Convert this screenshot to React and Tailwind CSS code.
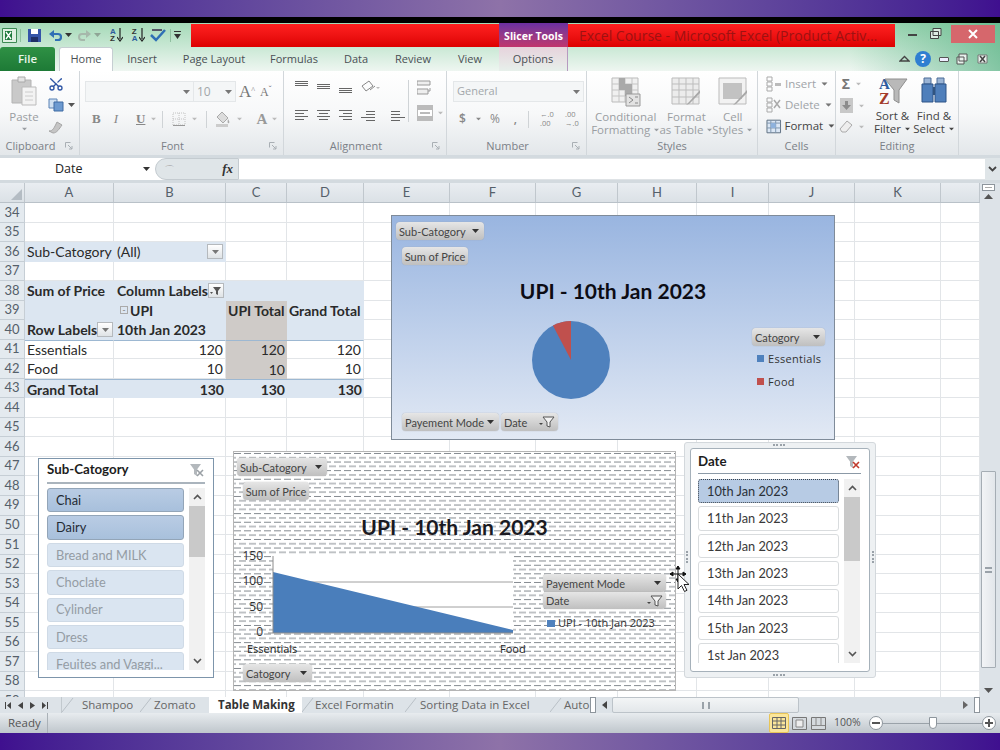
import { Scissors } from 'lucide-react';

const ROWS = [34, 35, 36, 37, 38, 39, 40, 41, 42, 43, 44, 45, 46, 47, 48, 49, 50, 51, 52, 53, 54, 55, 56, 57, 58, 59];
const COLS = ['A', 'B', 'C', 'D', 'E', 'F', 'G', 'H', 'I', 'J', 'K', ''];

const BLUE = 'bg-[#dce6f1]';
const GRAY = 'bg-[#cfcbc8]';

// row -> column index -> cell
const CELLS = {
    36: { 0: { t: 'Sub-Catogory', bg: BLUE }, 1: { t: '(All)', bg: BLUE, btn: 'arrow', pad: true } },
    38: { 0: { t: 'Sum of Price', bold: true, bg: BLUE }, 1: { t: 'Column Labels', bold: true, bg: BLUE, btn: 'filter', pad: true }, 2: { bg: BLUE }, 3: { bg: BLUE } },
    39: { 0: { bg: BLUE }, 1: { t: 'UPI', bold: true, bg: BLUE, minus: true, pad: true }, 2: { t: 'UPI Total', bold: true, bg: GRAY }, 3: { t: 'Grand Total', bold: true, bg: BLUE } },
    40: { 0: { t: 'Row Labels', bold: true, bg: BLUE, btn: 'arrow' }, 1: { t: '10th Jan 2023', bold: true, bg: BLUE, pad: true }, 2: { bg: GRAY }, 3: { bg: BLUE } },
    41: { 0: { t: 'Essentials', line: true }, 1: { t: '120', right: true, line: true }, 2: { t: '120', right: true, bg: GRAY, line: true }, 3: { t: '120', right: true, line: true } },
    42: { 0: { t: 'Food' }, 1: { t: '10', right: true }, 2: { t: '10', right: true, bg: GRAY }, 3: { t: '10', right: true } },
    43: { 0: { t: 'Grand Total', bold: true, bg: BLUE, line: true }, 1: { t: '130', right: true, bold: true, bg: BLUE, line: true }, 2: { t: '130', right: true, bold: true, bg: BLUE, line: true }, 3: { t: '130', right: true, bold: true, bg: BLUE, line: true } },
};

const Caret = ({ className = '' }) => (
    <svg width="7" height="4" viewBox="0 0 7 4" className={className}><path d="M0 0h7L3.5 4z" fill="currentColor" /></svg>
);

const Funnel = ({ color = '#8a8f94', cross }) => (
    <svg width="16" height="14" viewBox="0 0 16 14">
        <path d="M1 1h11L8 6.5V13L5 11V6.5z" fill={color} opacity="0.75" />
        {cross && <path d="M8 7l6 6M14 7l-6 6" stroke={cross} strokeWidth="1.6" />}
    </svg>
);

function CellButton({ kind }) {
    return (
        <span className="ml-auto mr-[1px] flex h-[15px] w-[16px] shrink-0 items-center justify-center border border-[#b5b9bd] bg-linear-to-b from-white to-[#dfe3e6] text-[#777]">
            {kind === 'arrow' ? (
                <Caret />
            ) : (
                <svg width="12" height="10" viewBox="0 0 12 10"><path d="M3 1h8L8 5v4L6 8V5z" fill="#555" /><path d="M0 6h3L1.5 8z" fill="#555" /></svg>
            )}
        </span>
    );
}

function SheetCell({ cell }) {
    if (!cell) return <div className="border-r border-b border-[#e2e5e8]" />;
    return (
        <div className={`flex items-center overflow-visible whitespace-nowrap pr-[2px] text-[14px] text-[#2a2a2a] ${cell.pad ? 'pl-[3px]' : 'pl-[2px]'} ${cell.bg || 'border-r border-b border-[#e2e5e8]'} ${cell.bold ? 'font-bold' : ''} ${cell.right ? 'justify-end' : ''} ${cell.line ? 'border-t border-t-[#9db8d2]' : ''}`}>
            {cell.minus && <span className="mr-[2px] ml-[3px] flex h-[8px] w-[8px] items-center justify-center border border-[#aaa] text-[8px] leading-none text-[#888]">-</span>}
            {cell.t}
            {cell.btn && <CellButton kind={cell.btn} />}
        </div>
    );
}

function FieldBtn({ label, caret, filter, className }) {
    return (
        <div className={`absolute flex items-center rounded-[4px] bg-linear-to-b from-[#e6e6e6] to-[#bfbfbf] px-[3px] font-['Lato',sans-serif] text-[11px] leading-none text-[#444] shadow-[0_0_1px_#999] ${className}`}>
            <span className="whitespace-nowrap">{label}</span>
            {caret && <Caret className="ml-auto mr-[2px] text-[#333]" />}
            {filter && (
                <svg className="ml-auto" width="16" height="12" viewBox="0 0 16 12"><path d="M4 1h11l-4 5v5l-3-1V6z" fill="#f3f3f3" stroke="#555" /><path d="M0 7h4L2 9z" fill="#444" /></svg>
            )}
        </div>
    );
}

function PieChart() {
    return (
        <div className="absolute left-[391px] top-[12px] h-[225px] w-[444px] border border-[#7f8b99] bg-linear-to-b from-[#99b5e0] to-[#e2e9f4] font-['Open_Sans',sans-serif]">
            <FieldBtn label="Sub-Catogory" caret className="left-[4px] top-[6px] h-[18px] w-[88px]" />
            <FieldBtn label="Sum of Price" className="left-[10px] top-[31px] h-[18px] w-[66px] justify-center" />
            <div className="absolute inset-x-0 top-[61px] text-center font-['Lato',sans-serif] text-[21px] font-bold leading-[28px] text-[#0c0c14]">UPI - 10th Jan 2023</div>
            <svg className="absolute left-[139px] top-[104px]" width="80" height="80" viewBox="0 0 80 80">
                <circle cx="40" cy="40" r="39" fill="#4f81bd" />
                <path d="M40 40V1A39 39 0 0 0 21.9 5.5z" fill="#c0504d" />
            </svg>
            <FieldBtn label="Catogory" caret className="left-[360px] top-[112px] h-[18px] w-[73px]" />
            <div className="absolute left-[365px] top-[135px] flex flex-col gap-[8px] text-[11px] leading-[15px] tracking-[0.3px] text-[#333]">
                <div className="flex items-center gap-[4px]"><span className="h-[7px] w-[7px] bg-[#4f81bd]" />Essentials</div>
                <div className="flex items-center gap-[4px]"><span className="h-[7px] w-[7px] bg-[#c0504d]" />Food</div>
            </div>
            <FieldBtn label="Payement Mode" caret className="left-[10px] top-[197px] h-[18px] w-[97px]" />
            <FieldBtn label="Date" filter className="left-[109px] top-[197px] h-[18px] w-[57px]" />
        </div>
    );
}

function AreaChart() {
    return (
        <div className="absolute left-[233px] top-[248px] h-[240px] w-[443px] border border-[#b5b5b5] bg-white font-['Open_Sans',sans-serif]">
            <svg className="absolute inset-0" width="441" height="238">
                <defs>
                    <pattern id="hatch" width="10" height="8.6" patternUnits="userSpaceOnUse">
                        <path d="M0 1.5h7M5 5.8h5M0 5.8h2" stroke="#80868c" strokeWidth="1" />
                    </pattern>
                </defs>
                <rect width="441" height="238" fill="url(#hatch)" />
                <rect x="39" y="104" width="240" height="77" fill="#fff" />
                <path d="M39 130h240M39 155h240" stroke="#a0a0a0" />
                <path d="M39 120L279 178V181H39z" fill="#4a7ebb" />
                <path d="M34 181h245M39 104v77" stroke="#8c8c8c" fill="none" />
            </svg>
            <FieldBtn label="Sub-Catogory" caret className="left-[3px] top-[6px] h-[18px] w-[90px]" />
            <FieldBtn label="Sum of Price" className="left-[9px] top-[30px] h-[18px] w-[66px] justify-center" />
            <div className="absolute inset-x-0 top-[61px] text-center font-['Lato',sans-serif] text-[21px] font-bold leading-[28px] text-[#1a1a22]">UPI - 10th Jan 2023</div>
            <div className="absolute left-[4px] top-[96px] flex w-[25px] flex-col items-end gap-[9.3px] text-[12px] leading-[16px] text-[#333]">
                <span>150</span><span>100</span><span>50</span><span>0</span>
            </div>
            <span className="absolute left-[13px] top-[189px] text-[11px] leading-[16px] text-[#222]">Essentials</span>
            <span className="absolute left-[266px] top-[189px] text-[11px] leading-[16px] text-[#222]">Food</span>
            <FieldBtn label="Catogory" caret className="left-[9px] top-[212px] h-[18px] w-[69px]" />
            <FieldBtn label="Payement Mode" caret className="left-[309px] top-[122px] h-[18px] w-[123px]" />
            <FieldBtn label="Date" filter className="left-[309px] top-[140px] h-[17px] w-[123px]" />
            <div className="absolute left-[313px] top-[163px] flex items-center gap-[3px] whitespace-nowrap text-[11px] leading-[16px] text-[#333]">
                <span className="h-[7px] w-[8px] bg-[#4f81bd]" />UPI - 10th Jan 2023
            </div>
        </div>
    );
}

function SlicerItem({ label, state }) {
    const styles = {
        on: 'border-[#93a5b8] bg-linear-to-b from-[#b9cce4] to-[#a8c0dc] text-[#1f2a33]',
        off: 'border-[#cfdae6] bg-[#dae5f1] text-[#949ca4]',
        focus: 'border-dotted border-[#39424b] bg-[#b7cbe4] text-[#2a3138]',
        plain: 'border-[#d9dcde] bg-white text-[#3a3a3a]',
    };
    return (
        <div className={`flex h-[24.4px] shrink-0 items-center rounded-[3px] border pl-[8px] text-[12.8px] leading-none whitespace-nowrap ${styles[state]}`}>{label}</div>
    );
}

function SlicerScroll({ thumbTop, thumbH }) {
    return (
        <div className="flex w-[16px] shrink-0 flex-col bg-[#f1f1f1]">
            <svg className="mx-auto mt-[6px] shrink-0" width="9" height="6" viewBox="0 0 9 6"><path d="M1 5l3.5-3.5L8 5" fill="none" stroke="#555" strokeWidth="1.6" /></svg>
            <div className="shrink-0" style={{ height: thumbTop }} />
            <div className="shrink-0 bg-[#c9c9c9]" style={{ height: thumbH }} />
            <svg className="mx-auto mb-[6px] mt-auto shrink-0" width="9" height="6" viewBox="0 0 9 6"><path d="M1 1l3.5 3.5L8 1" fill="none" stroke="#555" strokeWidth="1.6" /></svg>
        </div>
    );
}

function SubCategorySlicer() {
    const items = [['Chai', 'on'], ['Dairy', 'on'], ['Bread and MILK', 'off'], ['Choclate', 'off'], ['Cylinder', 'off'], ['Dress', 'off'], ['Feuites and Vaggi...', 'off']];
    return (
        <div className="absolute left-[38px] top-[255px] flex h-[220px] w-[176px] flex-col border border-[#7d95ab] bg-white px-[8px] pb-[7px] font-['Lato',sans-serif]">
            <div className="flex h-[25px] shrink-0 items-center justify-between border-b-2 border-[#aab4bd] pb-[1px] text-[13.3px] font-bold text-[#1d1d1d]">
                Sub-Catogory
                <Funnel color="#9aa0a5" cross="#9aa0a5" />
            </div>
            <div className="mt-[4px] flex min-h-0 flex-1 gap-[5px]">
                <div className="flex w-[137px] flex-col gap-[3px] overflow-hidden">
                    {items.map(([label, state]) => <SlicerItem key={label} label={label} state={state} />)}
                </div>
                <SlicerScroll thumbTop={6} thumbH={51} />
            </div>
        </div>
    );
}

function Handle({ className }) {
    return <span className={`absolute border-dotted border-[#9aa2a9] ${className}`} />;
}

function DateSlicer() {
    const items = ['10th Jan 2023', '11th Jan 2023', '12th Jan 2023', '13th Jan 2023', '14th Jan 2023', '15th Jan 2023', '1st Jan 2023'];
    return (
        <div className="absolute left-[684px] top-[239px] h-[236px] w-[192px] rounded-[3px] border border-[#d3d8dc] bg-[#eef1f3] p-[5px] font-['Lato',sans-serif]">
            <Handle className="left-[88px] top-[1px] w-[12px] border-t-2" />
            <Handle className="bottom-[1px] left-[88px] w-[12px] border-t-2" />
            <Handle className="left-[1px] top-[108px] h-[12px] border-l-2" />
            <Handle className="right-[1px] top-[108px] h-[12px] border-l-2" />
            <div className="flex h-full w-full flex-col rounded-[3px] border border-[#a6b1ba] bg-white pb-[8px] pl-[7px] pr-[8px]">
                <div className="flex h-[25px] shrink-0 items-center justify-between border-b border-[#8b99a6] pt-[1px] text-[13.3px] font-bold text-[#1d1d1d]">
                    Date
                    <Funnel color="#9aa0a5" cross="#c0392b" />
                </div>
                <div className="mt-[5px] flex min-h-0 flex-1 gap-[5px]">
                    <div className="flex w-[141px] flex-col gap-[3px] overflow-hidden">
                        {items.map((label, i) => <SlicerItem key={label} label={label} state={i === 0 ? 'focus' : 'plain'} />)}
                    </div>
                    <SlicerScroll thumbTop={6} thumbH={64} />
                </div>
            </div>
        </div>
    );
}

function Grid() {
    return (
        <div className="relative h-[494px] overflow-hidden bg-white font-['Lato',sans-serif]">
            <div className="grid auto-rows-[19.54px] grid-cols-[25px_89px_112px_61px_77px_86px_86px_82px_79px_72px_86px_86px_39px]">
                {ROWS.map(r => (
                    <div key={r} className="contents">
                        <div className="flex items-center justify-center border-r border-b border-[#c6ced5] bg-[#e4eaef] text-[13px] text-[#55606a]">{r}</div>
                        {COLS.map((c, i) => <SheetCell key={i} cell={CELLS[r]?.[i]} />)}
                    </div>
                ))}
            </div>
            <PieChart />
            <AreaChart />
            <SubCategorySlicer />
            <DateSlicer />
            <svg className="absolute left-[669px] top-[362px]" width="22" height="28" viewBox="0 0 22 28">
                <path d="M9 1v16M1 9h16M9 1l-2 3h4zM9 17l-2-3h4zM1 9l3-2v4zM17 9l-3-2v4z" stroke="#111" strokeWidth="1" fill="#111" />
                <path d="M9 9v15l3.5-3.5 3 6 2.5-1.2-3-5.800h5z" fill="#fff" stroke="#222" />
            </svg>
        </div>
    );
}

function ColumnHeaders() {
    const heads = [['A', 'w-[89px]'], ['B', 'w-[112px]'], ['C', 'w-[61px]'], ['D', 'w-[77px]'], ['E', 'w-[86px]'], ['F', 'w-[86px]'], ['G', 'w-[82px]'], ['H', 'w-[79px]'], ['I', 'w-[72px]'], ['J', 'w-[86px]'], ['K', 'w-[86px]'], ['', 'w-[39px]']];
    return (
        <div className="flex h-[20px] shrink-0 border-b border-[#b9c1c8] bg-linear-to-b from-[#e9edf1] to-[#dbe1e6] font-['Lato',sans-serif] text-[13px] text-[#55606a]">
            <div className="flex w-[25px] items-end justify-end border-r border-[#c0c7cd] p-[2px]">
                <svg width="11" height="11" viewBox="0 0 11 11"><path d="M11 0v11H0z" fill="#b4bcc3" /></svg>
            </div>
            {heads.map(([label, w], i) => (
                <div key={i} className={`flex items-center justify-center border-r border-[#c0c7cd] ${w}`}>{label}</div>
            ))}
        </div>
    );
}

function VerticalScroll() {
    return (
        <div className="flex w-[20px] shrink-0 flex-col bg-[#dde3e8] pl-[1px] pr-[4px] text-[#555]">
            <div className="mx-auto mt-[1px] flex h-[7px] w-[13px] items-center justify-center border border-[#8d959c] bg-white">
                <span className="h-[1px] w-[7px] bg-[#aaa]" />
            </div>
            <svg className="mx-auto mt-[3px]" width="9" height="5" viewBox="0 0 9 5"><path d="M4.500 0L9 5H0z" fill="currentColor" /></svg>
            <div className="mt-[272px] flex h-[197px] items-center justify-center rounded-[1px] border border-[#a5adb4] bg-linear-to-r from-[#f2f4f6] to-[#e2e6ea]">
                <span className="h-[6px] w-[7px] border-y-2 border-double border-[#9aa2a9]" />
            </div>
            <svg className="mx-auto mt-[20px]" width="9" height="5" viewBox="0 0 9 5"><path d="M0 0h9L4.500 5z" fill="currentColor" /></svg>
        </div>
    );
}

function RibbonTextButton({ lines, caretLine = 1, dark, wide }) {
    return (
        <div className={`flex flex-col items-center text-[11.5px] leading-[13px] ${dark ? 'text-[#444]' : 'text-[#9a9ea2]'} ${wide || ''}`}>
            {lines.map((l, i) => (
                <span key={i} className="flex items-center gap-[3px] whitespace-nowrap">{l}{i === caretLine && <Caret className="scale-75" />}</span>
            ))}
        </div>
    );
}

function Group({ label, width, launcher, children }) {
    return (
        <div className={`flex h-full shrink-0 flex-col border-r border-[#d2d7db] ${width}`}>
            <div className="min-h-0 flex-1">{children}</div>
            <div className={`relative flex h-[18px] shrink-0 items-center justify-center text-[11px] text-[#7b8087] ${launcher ? 'pr-[18px]' : ''}`}>
                {label}
                {launcher && (
                    <svg className="absolute right-[6px] top-[5px]" width="8" height="8" viewBox="0 0 8 8"><path d="M0.500 0.500h5M0.500 0.500v5M3 3l4 4M7 4v3H4" stroke="#a9afb4" fill="none" /></svg>
                )}
            </div>
        </div>
    );
}

const AlignLines = ({ rows }) => (
    <svg width="14" height="14" viewBox="0 0 14 14">
        {rows.map(([x1, x2, y], i) => <path key={i} d={`M${x1} ${y + 0.5}H${x2}`} stroke="#666" />)}
    </svg>
);

function GrayIcon({ type }) {
    if (type === 'cond') {
        return (
            <svg width="30" height="30" viewBox="0 0 30 30">
                <path d="M1 1h26v24H1z" fill="#f0f0f0" stroke="#bbb" />
                <path d="M1 7h26M1 13h26M1 19h26M8 1v24M14 1v24M21 1v24" stroke="#c4c4c4" />
                <path d="M8 1h6v12H8zM14 7h7v12h-7z" fill="#a9a9a9" />
                <path d="M15 17h14v12H15z" fill="#e2e2e2" stroke="#999" />
                <path d="M18 20l4 3-4 3M24 20h3M24 26h3" stroke="#888" fill="none" />
            </svg>
        );
    }
    if (type === 'table') {
        return (
            <svg width="30" height="30" viewBox="0 0 30 30">
                <path d="M1 1h27v26H1z" fill="#ececec" stroke="#bbb" />
                <path d="M1 7h27M1 13h27M1 20h27M8 1v26M15 1v26M22 1v26" stroke="#bdbdbd" />
                <path d="M29 13L18 25l-3 3 3-1 11-11z" fill="#a8a8a8" />
            </svg>
        );
    }
    return (
        <svg width="30" height="30" viewBox="0 0 30 30">
            <path d="M1 1h27v26H1z" fill="#f2f2f2" stroke="#bbb" />
            <path d="M5 6h19v16H5z" fill="#c2c2c2" />
            <path d="M29 13L18 25l-3 3 3-1 11-11z" fill="#a8a8a8" />
        </svg>
    );
}

function Ribbon() {
    return (
        <div className="flex h-[84px] shrink-0 bg-linear-to-b from-white via-[#f7f8f9] to-[#e3e7ea] font-['Open_Sans',sans-serif]">
            <Group label="Clipboard" width="w-[80px]" launcher>
                <div className="flex">
                    <div className="flex w-[48px] flex-col items-center pt-[5px] text-[11.5px] leading-[13px] text-[#9a9ea2]">
                        <svg width="26" height="30" viewBox="0 0 26 30">
                            <path d="M1 4h19v23H1z" fill="#c9c9c9" stroke="#b3b3b3" />
                            <path d="M7 1h7v5H7z" fill="#e4e4e4" stroke="#aaa" />
                            <path d="M11 11h14v18H11z" fill="#f3f3f3" stroke="#bbb" />
                            <path d="M14 16h8M14 20h8M14 24h8" stroke="#ccc" />
                        </svg>
                        <span className="mt-[4px]">Paste</span>
                        <Caret className="mt-[4px] scale-75" />
                    </div>
                    <div className="flex flex-col items-start gap-[6px] pt-[5px]">
                        <Scissors size={16} color="#2f56a5" strokeWidth={2} className="-rotate-90" />
                        <div className="flex items-center gap-[4px] text-[#555]">
                            <svg width="16" height="14" viewBox="0 0 16 14"><path d="M1 1h8v9H1z" fill="#cfe0f2" stroke="#5b82b5" /><path d="M6 4h9v9H6z" fill="#6d9ad0" stroke="#3e6ba3" /></svg>
                            <Caret />
                        </div>
                        <svg width="16" height="16" viewBox="0 0 16 16"><path d="M1 13c4 0 5-3 8-9l5 3c-3 4-5 8-9 8z" fill="#c5c5c5" stroke="#a5a5a5" /></svg>
                    </div>
                </div>
            </Group>
            <Group label="Font" width="w-[204px]" launcher>
                <div className="flex flex-col gap-[7px] pl-[5px] pt-[10px] text-[#8f9499]">
                    <div className="flex h-[21px] items-center">
                        <div className="flex h-full w-[109px] items-center justify-end border border-[#e4e7e9] bg-[#f4f6f7] pr-[3px] text-[#777]"><Caret /></div>
                        <div className="flex h-full w-[42px] items-center border border-l-0 border-[#e4e7e9] bg-[#f4f6f7] pl-[3px] pr-[3px] text-[12px] text-[#a2a6aa]">10<Caret className="ml-auto text-[#777]" /></div>
                        <span className="ml-[3px] font-['Liberation_Serif',serif] text-[17px] leading-none text-[#777]">A<sup className="text-[8px]">^</sup></span>
                        <span className="ml-[5px] font-['Liberation_Serif',serif] text-[12px] leading-none text-[#777]">A<sup className="text-[8px]">ˇ</sup></span>
                    </div>
                    <div className="flex h-[20px] items-center font-['Liberation_Serif',serif] text-[13px] text-[#888]">
                        <b className="ml-[7px]">B</b>
                        <i className="ml-[13px]">I</i>
                        <u className="ml-[18px] font-bold">U</u>
                        <Caret className="ml-[5px] scale-75 text-[#bbb]" />
                        <span className="ml-[5px] h-[17px] border-l border-[#cfd3d6]" />
                        <svg className="ml-[9px]" width="14" height="14" viewBox="0 0 14 14"><path d="M1 1h12v12H1zM7 1v12M1 7h12" fill="none" stroke="#c2c2c2" strokeDasharray="1 1" /><path d="M1 13.500h12" stroke="#999" /></svg>
                        <Caret className="ml-[5px] scale-75 text-[#bbb]" />
                        <span className="ml-[8px] h-[17px] border-l border-[#cfd3d6]" />
                        <svg className="ml-[8px]" width="16" height="16" viewBox="0 0 16 16"><path d="M7 1l6 6-5 5-6-6z" fill="#dcdcdc" stroke="#aaa" /><path d="M13 8c1 2 2 3 1 4s-2 0-1-4z" fill="#aaa" /><path d="M1 13h12v3H1z" fill="#ccc" /></svg>
                        <Caret className="ml-[5px] scale-75 text-[#bbb]" />
                        <span className="ml-[13px] text-[15px] font-bold text-[#999]">A</span>
                        <Caret className="ml-[4px] scale-75 text-[#bbb]" />
                    </div>
                </div>
            </Group>
            <Group label="Alignment" width="w-[163px]" launcher>
                <div className="flex pl-[11px] pt-[9px]">
                    <div className="grid grid-cols-[22px_22px_22px_30px_14px] gap-y-[15px]">
                        <AlignLines rows={[[0, 13, 1], [0, 13, 3], [0, 13, 5]]} />
                        <AlignLines rows={[[0, 13, 4], [0, 13, 6], [0, 13, 8]]} />
                        <AlignLines rows={[[0, 13, 8], [0, 13, 10], [0, 13, 12]]} />
                        <svg width="20" height="14" viewBox="0 0 20 14"><path d="M1 6l7-5 4 5-7 5zM9 10l5-4" fill="none" stroke="#888" /><path d="M15 7h4l-2 2z" fill="#bbb" /></svg>
                        <span />
                        <AlignLines rows={[[0, 13, 1], [0, 9, 4], [0, 13, 7], [0, 9, 10]]} />
                        <AlignLines rows={[[0, 13, 1], [2, 11, 4], [0, 13, 7], [2, 11, 10]]} />
                        <AlignLines rows={[[0, 13, 1], [4, 13, 4], [0, 13, 7], [4, 13, 10]]} />
                        <AlignLines rows={[[5, 14, 2], [5, 14, 5], [0, 14, 8], [5, 14, 11]]} />
                        <AlignLines rows={[[0, 9, 2], [0, 9, 5], [0, 14, 8], [0, 9, 11]]} />
                    </div>
                    <span className="ml-[3px] h-[42px] border-l border-[#cfd3d6]" />
                    <div className="ml-[8px] flex flex-col gap-[9px]">
                        <svg width="16" height="16" viewBox="0 0 16 16"><path d="M0 1h13v4H0zM0 9h11v5H0z" fill="#eee" stroke="#999" /><path d="M13 8v3l-2 0" stroke="#999" fill="none" /></svg>
                        <div className="flex items-center gap-[4px]">
                            <svg width="16" height="16" viewBox="0 0 16 16"><path d="M0 0h16v16H0z" fill="#bbb" /><path d="M1 5h14v6H1z" fill="#fff" /><path d="M3 8h10" stroke="#777" /></svg>
                            <Caret className="scale-75 text-[#bbb]" />
                        </div>
                    </div>
                </div>
            </Group>
            <Group label="Number" width="w-[140px]" launcher>
                <div className="flex flex-col gap-[7px] pl-[6px] pt-[10px] text-[#8f9499]">
                    <div className="flex h-[21px] w-[131px] items-center border border-[#e4e7e9] bg-[#f4f6f7] px-[3px] text-[11px] text-[#a2a6aa]">General<Caret className="ml-auto text-[#777]" /></div>
                    <div className="flex h-[20px] items-center text-[12px] font-semibold text-[#888]">
                        <span className="ml-[6px]">$</span>
                        <Caret className="ml-[9px] scale-75" />
                        <span className="ml-[8px] font-normal">%</span>
                        <span className="ml-[14px]">,</span>
                        <span className="ml-[11px] h-[17px] border-l border-[#cfd3d6]" />
                        <span className="ml-[11px] flex w-[21px] flex-col text-[7.5px] font-normal leading-[9px]"><span>←.0</span><span>.00</span></span>
                        <span className="ml-[4px] flex flex-col text-[7.5px] font-normal leading-[9px]"><span>.00</span><span>→.0</span></span>
                    </div>
                </div>
            </Group>
            <Group label="Styles" width="w-[171px]">
                <div className="flex pt-[6px]">
                    <div className="flex w-[78px] flex-col items-center gap-[3px]"><GrayIcon type="cond" /><RibbonTextButton lines={['Conditional', 'Formatting']} /></div>
                    <div className="flex w-[44px] flex-col items-center gap-[3px]"><GrayIcon type="table" /><RibbonTextButton lines={['Format', 'as Table']} /></div>
                    <div className="flex w-[49px] flex-col items-center gap-[3px]"><GrayIcon type="cell" /><RibbonTextButton lines={['Cell', 'Styles']} /></div>
                </div>
            </Group>
            <Group label="Cells" width="w-[78px]">
                <div className="flex flex-col gap-[5px] pl-[8px] pt-[5px] text-[11.5px] leading-[16px]">
                    <div className="flex items-center gap-[3px] text-[#a0a4a8]">
                        <svg width="16" height="16" viewBox="0 0 16 16"><path d="M1 1h5v4H1zM1 6h5v4H1zM1 11h5v4H1z" fill="none" stroke="#aaa" /><path d="M9 7h6v3H9z" fill="#bbb" /></svg>
                        Insert<Caret className="ml-[2px] scale-90 text-[#777]" />
                    </div>
                    <div className="flex items-center gap-[3px] text-[#a0a4a8]">
                        <svg width="16" height="16" viewBox="0 0 16 16"><path d="M1 1h5v4H1zM1 6h5v4H1zM1 11h5v4H1z" fill="none" stroke="#aaa" /><path d="M8 3l6 8M14 3l-6 8" stroke="#aaa" strokeWidth="1.5" /></svg>
                        Delete<Caret className="ml-[2px] scale-90 text-[#777]" />
                    </div>
                    <div className="flex items-center gap-[3px] text-[#444]">
                        <svg width="16" height="16" viewBox="0 0 16 16"><path d="M1 2h14v13H1z" fill="#dbe7f5" stroke="#5e6f80" /><path d="M1 5h14M5 2v13M10 2v13M1 10h14" stroke="#7d95ad" /><path d="M5 5h5v5H5z" fill="#8eb2dd" /></svg>
                        Format<Caret className="ml-[2px] scale-90 text-[#555]" />
                    </div>
                </div>
            </Group>
            <Group label="Editing" width="w-[123px]">
                <div className="flex pt-[5px]">
                    <div className="flex w-[36px] flex-col items-center gap-[7px] pr-[4px] text-[#777]">
                        <span className="flex items-center gap-[5px] text-[14px] font-bold leading-[15px]">Σ<Caret className="scale-75 text-[#bbb]" /></span>
                        <span className="flex items-center gap-[5px]"><svg width="13" height="15" viewBox="0 0 13 15"><path d="M0 0h13v15H0z" fill="#c8c8c8" /><path d="M6.500 12L2 7h3V3h3v4h3z" fill="#8c8c8c" /></svg><Caret className="scale-75 text-[#bbb]" /></span>
                        <span className="flex items-center gap-[5px]"><svg width="14" height="13" viewBox="0 0 14 13"><path d="M1 9l7-8 5 4-6 7H3z" fill="#eee" stroke="#aaa" /></svg><Caret className="scale-75 text-[#bbb]" /></span>
                    </div>
                    <div className="flex w-[41px] flex-col items-center">
                        <svg width="30" height="30" viewBox="0 0 30 30">
                            <text x="1" y="13" fontSize="15" fontWeight="700" fontFamily="Liberation Serif" fill="#2e5c9e">A</text>
                            <text x="1" y="28" fontSize="16" fontWeight="700" fontFamily="Liberation Serif" fill="#a33a2a">Z</text>
                            <path d="M7 3h22L21 14v13l-5-3V14z" fill="#b9b9b9" stroke="#8f8f8f" />
                        </svg>
                        <RibbonTextButton dark lines={['Sort &', 'Filter']} wide="mt-[3px]" />
                    </div>
                    <div className="flex w-[42px] flex-col items-center">
                        <svg width="30" height="30" viewBox="0 0 30 30">
                            <path d="M5 2h7v6H5zM18 2h7v6h-7z" fill="#9ab4d5" stroke="#4c6d98" />
                            <path d="M3 8h11v18H3zM16 8h11v18H16z" fill="#4f7fbb" stroke="#2f5587" />
                            <path d="M14 11h2v8h-2z" fill="#31547f" />
                        </svg>
                        <RibbonTextButton dark lines={['Find &', 'Select']} wide="mt-[3px]" />
                    </div>
                </div>
            </Group>
        </div>
    );
}

function TitleBar() {
    return (
        <div className="flex h-[24px] shrink-0">
            <div className="flex w-[191px] shrink-0 items-center pl-[2px]">
                <svg width="15" height="15" viewBox="0 0 15 15"><path d="M0.500 0.500h14v14h-14z" fill="#dff0e2" stroke="#3c8b53" /><path d="M3 3h7v9H3z" fill="#1e7a3c" /><path d="M4 4l5 7M9 4l-5 7" stroke="#fff" strokeWidth="1.3" /></svg>
                <span className="ml-[3px] h-[13px] border-l border-[#8fbf9f]" />
                <svg className="ml-[6px]" width="15" height="15" viewBox="0 0 15 15"><path d="M1 1h13v13H1z" fill="#3454a8" /><path d="M4 1h7v5H4z" fill="#fff" /><path d="M4 9h7v5H4z" fill="#1f2f66" /></svg>
                <svg className="ml-[7px]" width="13" height="13" viewBox="0 0 13 13"><path d="M4 5h5a3 3 0 010 6H6" fill="none" stroke="#2f6fb5" strokeWidth="2.200" /><path d="M5 1v8L0 5z" fill="#2f6fb5" /></svg>
                <Caret className="ml-[3px] text-[#333]" />
                <svg className="ml-[6px]" width="13" height="13" viewBox="0 0 13 13"><path d="M9 5H4a3 3 0 000 6h3" fill="none" stroke="#a6b8ab" strokeWidth="2" /><path d="M8 1v8l5-4z" fill="#a6b8ab" /></svg>
                <Caret className="ml-[3px] text-[#8fa595]" />
                <div className="ml-[9px] flex flex-col font-['Liberation_Sans',sans-serif] text-[8px] font-bold leading-[7px]"><span className="text-[#2e5c9e]">A</span><span className="text-[#333]">Z</span></div>
                <svg className="ml-[1px]" width="6" height="14" viewBox="0 0 6 14"><path d="M3 0v11M0 9l3 4 3-4" fill="none" stroke="#222" strokeWidth="1.200" /></svg>
                <div className="ml-[9px] flex flex-col font-['Liberation_Sans',sans-serif] text-[8px] font-bold leading-[7px]"><span className="text-[#333]">Z</span><span className="text-[#2e5c9e]">A</span></div>
                <svg className="ml-[1px]" width="6" height="14" viewBox="0 0 6 14"><path d="M3 0v11M0 9l3 4 3-4" fill="none" stroke="#222" strokeWidth="1.200" /></svg>
                <svg className="ml-[5px]" width="16" height="14" viewBox="0 0 16 14"><path d="M1 7l5 5 9-10" fill="none" stroke="#2f6fb5" strokeWidth="2.500" /><path d="M2 2h10" stroke="#556" strokeWidth="2" /></svg>
                <span className="ml-[4px] h-[13px] border-l border-[#8fbf9f]" />
                <svg className="ml-[3px]" width="7" height="8" viewBox="0 0 7 8"><path d="M0 0h7v1H0zM0 3h7L3.500 8z" fill="#333" /></svg>
            </div>
            <div className="mt-[1px] h-[23px] w-[308px] shrink-0 bg-linear-to-b from-[#ff2020] to-[#dd0000]" />
            <div className="flex h-[24px] w-[69px] shrink-0 items-center justify-center bg-linear-to-b from-[#6b2fa0] to-[#c1336c] pt-[3px] text-[10.5px] font-bold text-white">Slicer Tools</div>
            <div className="mt-[1px] flex h-[23px] w-[327px] shrink-0 items-center bg-linear-to-b from-[#ff2020] to-[#dd0000] pl-[11px] text-[14px] whitespace-nowrap text-[#9d1212]">Excel Course  -  Microsoft Excel (Product Activ...</div>
            <div className="flex flex-1 items-start pt-[2px] text-white">
                <span className="ml-[13px] mt-[9px] h-[2px] w-[9px] bg-[#444]" />
                <svg className="ml-[13px] mt-[3px]" width="12" height="11" viewBox="0 0 12 11"><path d="M3 .5h8v7H3zM.5 3.500h8v7h-8z" fill="#dcece2" stroke="#444" /></svg>
                <div className="ml-[9px] flex h-[18px] w-[44px] items-center justify-center bg-[#d6676c]">
                    <svg width="10" height="10" viewBox="0 0 10 10"><path d="M1 1l8 8M9 1l-8 8" stroke="#fff" strokeWidth="2" /></svg>
                </div>
            </div>
        </div>
    );
}

function TabsBar() {
    const tabs = [['Insert', 'w-[58px]'], ['Page Layout', 'w-[86px]'], ['Formulas', 'w-[74px]'], ['Data', 'w-[50px]'], ['Review', 'w-[64px]'], ['View', 'w-[50px]']];
    return (
        <div className="flex h-[24px] shrink-0 text-[11px] text-[#4a4f54]">
            <div className="flex h-full w-[55px] items-center justify-center rounded-t-[3px] bg-linear-to-b from-[#2f9145] to-[#1d7a36] text-[11.5px] font-semibold text-[#e8f5ea]">File</div>
            <div className="ml-[4px] flex h-[24px] w-[54px] items-center justify-center rounded-t-[3px] border border-b-0 border-[#c6ced2] bg-white">Home</div>
            {tabs.map(([label, w]) => <div key={label} className={`flex items-center justify-center pt-[1px] ${w}`}>{label}</div>)}
            <div className="ml-[4px] flex w-[69px] items-center justify-center border-r border-[#b69ac0] bg-linear-to-b from-[#e6d3dc] to-[#e7f0eb] pt-[1px]">Options</div>
            <div className="flex flex-1 items-center">
                <svg className="ml-[331px]" width="11" height="8" viewBox="0 0 11 8"><path d="M1 6l4.500-4.500L10 6z" fill="none" stroke="#444" strokeWidth="1.400" /></svg>
                <span className="ml-[5px] flex h-[16px] w-[16px] items-center justify-center rounded-full bg-[#2f7fd1] text-[12px] font-bold text-white">?</span>
                <span className="ml-[8px] h-[5px] w-[10px] rounded-[1px] border border-[#555] bg-[#eef]" />
                <svg className="ml-[7px]" width="12" height="12" viewBox="0 0 12 12"><path d="M3 1h8v7H3zM1 4h7v7H1z" fill="#e8f1ec" stroke="#555" /></svg>
                <svg className="ml-[9px]" width="11" height="10" viewBox="0 0 11 10"><path d="M1 1h9v8H1z" fill="#e8f1ec" stroke="#777" /><path d="M3 2l5 6M8 2L3 8" stroke="#444" strokeWidth="1.500" /></svg>
            </div>
        </div>
    );
}

function FormulaBar() {
    return (
        <div className="my-[3px] flex h-[22px] shrink-0 bg-white">
            <div className="flex w-[155px] items-center pl-[55px] font-['Open_Sans',sans-serif] text-[12.5px] text-[#222]">
                Date
                <Caret className="ml-auto mr-[5px] text-[#333]" />
            </div>
            <div className="flex w-[84px] items-center rounded-l-[11px] border border-[#c4cbd0] bg-[#dfe5e8] pl-[8px] pr-[5px]">
                <span className="text-[11px] leading-none text-[#aaa]">⌒</span>
                <span className="ml-auto font-['Liberation_Serif',serif] text-[13px] font-bold italic text-[#333]">fx</span>
            </div>
            <div className="flex-1 border-y border-[#dfe3e6]" />
            <div className="flex w-[15px] items-center justify-center bg-[#dfe5e8]">
                <svg width="9" height="6" viewBox="0 0 9 6"><path d="M1 1l3.500 3.500L8 1" fill="none" stroke="#444" strokeWidth="1.800" /></svg>
            </div>
        </div>
    );
}

function SheetTabs() {
    const tabs = [
        { label: 'Shampoo', box: 'w-[78px] pl-[20px]' },
        { label: 'Zomato', box: 'w-[69px] pl-[14px]' },
        { label: 'Table Making', box: 'w-[93px] pl-[9px] bg-white font-bold text-[#333]', active: true },
        { label: 'Excel Formatin', box: 'w-[103px] pl-[13px]' },
        { label: 'Sorting Data in Excel', box: 'w-[145px] pl-[15px]' },
        { label: 'Auto', box: 'w-[40px] pl-[14px] overflow-hidden' },
    ];
    return (
        <div className="flex h-[16px] shrink-0 bg-[#dde3e8] font-['Open_Sans',sans-serif] text-[11.5px] leading-[16px] text-[#666]">
            <div className="flex w-[62px] items-center gap-[7px] border-r border-[#c2c9ce] pl-[5px] text-[#444]">
                <svg width="6" height="7" viewBox="0 0 6 7"><path d="M0 0h1v7H0zM6 0v7L2 3.500z" fill="currentColor" /></svg>
                <svg width="5" height="7" viewBox="0 0 5 7"><path d="M5 0v7L0 3.500z" fill="currentColor" /></svg>
                <svg width="5" height="7" viewBox="0 0 5 7"><path d="M0 0v7l5-3.500z" fill="currentColor" /></svg>
                <svg width="6" height="7" viewBox="0 0 6 7"><path d="M5 0h1v7H5zM0 0v7l4-3.500z" fill="currentColor" /></svg>
            </div>
            {tabs.map(t => (
                <div key={t.label} className={`relative whitespace-nowrap ${t.box}`}>
                    {!t.active && (
                        <svg className="absolute bottom-0 left-0" width="12" height="16" viewBox="0 0 12 16"><path d="M0 15L11 1" stroke="#b9c0c6" /></svg>
                    )}
                    {t.label}
                </div>
            ))}
            <div className="flex h-full w-[6px] items-center justify-center border border-[#8d959c] bg-white" />
            <svg className="ml-[6px] mt-[4px]" width="5" height="8" viewBox="0 0 5 8"><path d="M5 0v8L0 4z" fill="#444" /></svg>
            <div className="ml-[5px] flex w-[187px] items-center justify-center rounded-[2px] border border-[#bcc3c9] bg-linear-to-b from-[#f3f5f6] to-[#e3e7ea]">
                <span className="h-[7px] w-[8px] border-x-2 border-double border-[#9aa2a9]" />
            </div>
            <svg className="ml-[164px] mt-[4px]" width="5" height="8" viewBox="0 0 5 8"><path d="M0 0v8l5-4z" fill="#666" /></svg>
            <div className="ml-[6px] flex h-full w-[6px] border border-[#8d959c] bg-white" />
        </div>
    );
}

function StatusBar() {
    return (
        <div className="flex h-[20px] shrink-0 items-center bg-linear-to-b from-[#e8ecef] to-[#bfc6cc] font-['Open_Sans',sans-serif] text-[11.5px] text-[#555]">
            <div className="flex h-full w-[48px] items-center border-r border-[#aab1b7] pl-[8px]">Ready</div>
            <div className="ml-[721px] flex h-full w-[20px] items-center justify-center rounded-[2px] border border-[#e8c558] bg-[#fbe69a]">
                <svg width="14" height="12" viewBox="0 0 14 12"><path d="M.5.500h13v11H.5zM.5 4h13M.5 8h13M5 .5v11M9 .5v11" fill="none" stroke="#666" /></svg>
            </div>
            <svg className="ml-[3px]" width="15" height="13" viewBox="0 0 15 13"><path d="M.5.500h14v12H.5z" fill="#d5dade" stroke="#777" /><path d="M4 3h7v7H4z" fill="#eee" stroke="#888" /></svg>
            <svg className="ml-[4px]" width="15" height="13" viewBox="0 0 15 13"><path d="M.5.500h14v12H.5z" fill="#d5dade" stroke="#777" /><path d="M5 .5v8h5V.5M.5 8.500H14" fill="none" stroke="#888" /></svg>
            <span className="ml-[8px] w-[28px] text-[10.5px]">100%</span>
            <span className="ml-[7px] flex h-[14px] w-[14px] items-center justify-center rounded-full border border-[#8d959c] bg-white">
                <span className="h-[2px] w-[8px] bg-[#555]" />
            </span>
            <div className="relative h-[1px] w-[99px] bg-[#9aa2a9]">
                <span className="absolute left-[46px] top-[-6px] h-[12px] w-[8px] rounded-b-[4px] border border-[#8d959c] bg-white" />
            </div>
            <span className="relative flex h-[14px] w-[14px] items-center justify-center rounded-full border border-[#8d959c] bg-white">
                <span className="h-[2px] w-[8px] bg-[#555]" />
                <span className="absolute h-[8px] w-[2px] bg-[#555]" />
            </span>
        </div>
    );
}

export default function App() {
    return (
        <div className="flex h-[750px] w-[1000px] flex-col overflow-hidden bg-black font-['Open_Sans',sans-serif]">
            <div className="h-[17px] shrink-0 bg-linear-to-r from-[#3f0f8f] via-[#8e72a8] to-[#3f0f8f]" />
            <div className="h-[6px] shrink-0 bg-black" />
            <div className="flex h-[710px] flex-col bg-[#d3dadf]">
                <div className="flex h-[48px] shrink-0 flex-col bg-[linear-gradient(to_right,transparent_85%,#4fae7eaa),linear-gradient(to_bottom,#a5dab8,#eef6f1)]">
                    <TitleBar />
                    <TabsBar />
                </div>
                <Ribbon />
                <FormulaBar />
                <div className="flex h-[514px] shrink-0">
                    <div className="flex w-[980px] flex-col">
                        <ColumnHeaders />
                        <Grid />
                    </div>
                    <VerticalScroll />
                </div>
                <SheetTabs />
                <StatusBar />
            </div>
            <div className="h-[17px] shrink-0 bg-linear-to-r from-[#3f0f8f] via-[#8e72a8] to-[#3f0f8f]" />
        </div>
    );
}
